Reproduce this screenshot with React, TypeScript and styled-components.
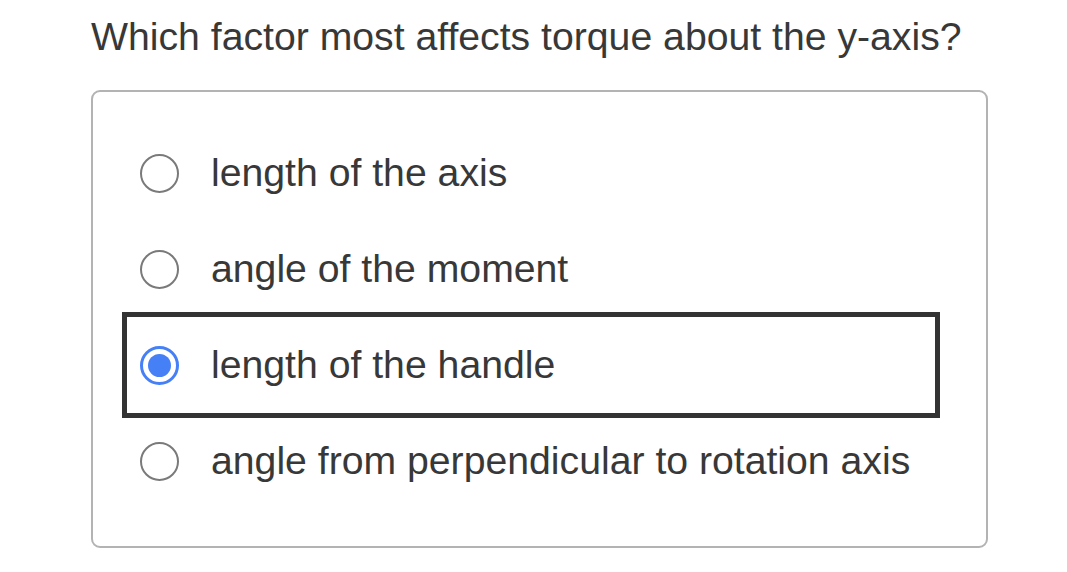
import styled, { createGlobalStyle } from "styled-components";

const GlobalStyle = createGlobalStyle`
  html, body {
    margin: 0;
    padding: 0;
    background: #ffffff;
  }
  body {
    font-family: "Liberation Sans", Arial, sans-serif;
    color: #333333;
  }
`;

const Page = styled.div`
  padding: 14px 0 0 91px;
  width: 897px;
`;

const Question = styled.h2`
  margin: 0 0 31px 0;
  font-size: 39.2px;
  font-weight: 400;
  line-height: 45px;
  color: #383838;
`;

const Card = styled.div`
  border: 2px solid #b3b3b3;
  border-radius: 9px;
  padding: 33px 51px 37px 34px;
  display: flex;
  flex-direction: column;
`;

const Option = styled.label<{ $focused?: boolean }>`
  display: flex;
  align-items: center;
  height: 96px;
  padding-left: 13px;
  gap: 32px;
  cursor: pointer;
  outline: ${(p) => (p.$focused ? "5px solid #333333" : "none")};
  font-size: 39.2px;
  color: #383838;
`;

const Radio = styled.span<{ $checked?: boolean }>`
  flex-shrink: 0;
  box-sizing: border-box;
  width: 39px;
  height: 39px;
  border-radius: 50%;
  border: ${(p) => (p.$checked ? "3px solid #4580f7" : "2.5px solid #7a7a7a")};
  display: flex;
  align-items: center;
  justify-content: center;

  &::after {
    content: "";
    display: ${(p) => (p.$checked ? "block" : "none")};
    width: 23px;
    height: 23px;
    border-radius: 50%;
    background: #4580f7;
  }
`;

const options = [
  "length of the axis",
  "angle of the moment",
  "length of the handle",
  "angle from perpendicular to rotation axis",
];

const App = () => {
  const selected = 2;
  return (
    <>
      <GlobalStyle />
      <Page>
        <Question>Which factor most affects torque about the y-axis?</Question>
        <Card>
          {options.map((text, i) => (
            <Option key={text} $focused={i === selected}>
              <Radio $checked={i === selected} />
              <span>{text}</span>
            </Option>
          ))}
        </Card>
      </Page>
    </>
  );
};

export default App;
